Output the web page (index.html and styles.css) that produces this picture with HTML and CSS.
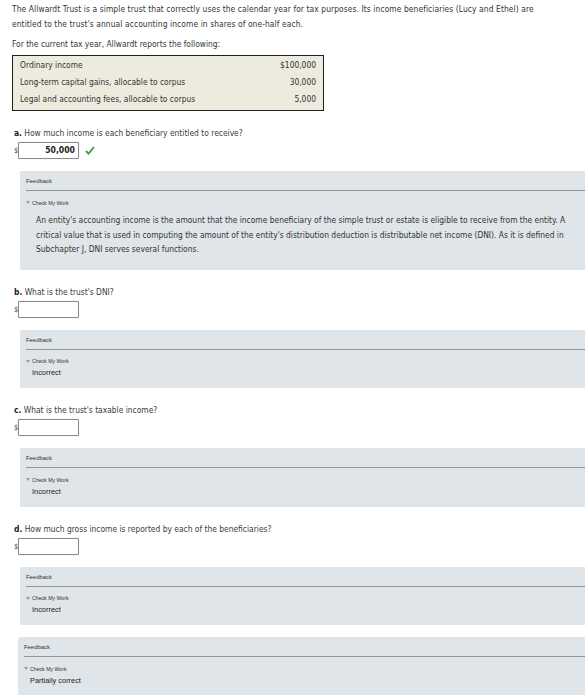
FILE: index.html
```html
<!DOCTYPE html>
<html>
<head>
<meta charset="utf-8">
<link rel="stylesheet" href="styles.css">
</head>
<body>
<div class="page">
  <p class="intro">The Allwardt Trust is a simple trust that correctly uses the calendar year for tax purposes. Its income beneficiaries (Lucy and Ethel) are entitled to the trust's annual accounting income in shares of one-half each.</p>
  <p class="intro2">For the current tax year, Allwardt reports the following:</p>
  <div class="table">
    <div class="row"><span>Ordinary income</span><span>$100,000</span></div>
    <div class="row"><span>Long-term capital gains, allocable to corpus</span><span>30,000</span></div>
    <div class="row"><span>Legal and accounting fees, allocable to corpus</span><span>5,000</span></div>
  </div>

  <div class="question">
    <div class="qlabel"><b>a.</b> How much income is each beneficiary entitled to receive?</div>
    <div class="answer"><span class="dollar">$</span><span class="input filled">50,000</span><svg class="check" width="10" height="9" viewBox="0 0 10 9"><path d="M1 5 L3.6 7.6 L9 1" fill="none" stroke="#3f9a3a" stroke-width="1.8"/></svg></div>
  </div>
  <div class="feedback">
    <div class="fb-title">Feedback</div>
    <div class="fb-check"><span class="tri"></span>Check My Work</div>
    <p class="fb-text">An entity's accounting income is the amount that the income beneficiary of the simple trust or estate is eligible to receive from the entity. A critical value that is used in computing the amount of the entity's distribution deduction is distributable net income (DNI). As it is defined in Subchapter J, DNI serves several functions.</p>
  </div>

  <div class="question">
    <div class="qlabel"><b>b.</b> What is the trust's DNI?</div>
    <div class="answer"><span class="dollar">$</span><span class="input"></span></div>
  </div>
  <div class="feedback short">
    <div class="fb-title">Feedback</div>
    <div class="fb-check"><span class="tri"></span>Check My Work</div>
    <div class="fb-result">Incorrect</div>
  </div>

  <div class="question">
    <div class="qlabel"><b>c.</b> What is the trust's taxable income?</div>
    <div class="answer"><span class="dollar">$</span><span class="input"></span></div>
  </div>
  <div class="feedback short">
    <div class="fb-title">Feedback</div>
    <div class="fb-check"><span class="tri"></span>Check My Work</div>
    <div class="fb-result">Incorrect</div>
  </div>

  <div class="question">
    <div class="qlabel"><b>d.</b> How much gross income is reported by each of the beneficiaries?</div>
    <div class="answer"><span class="dollar">$</span><span class="input"></span></div>
  </div>
  <div class="feedback short">
    <div class="fb-title">Feedback</div>
    <div class="fb-check"><span class="tri"></span>Check My Work</div>
    <div class="fb-result">Incorrect</div>
  </div>

  <div class="feedback short last">
    <div class="fb-title">Feedback</div>
    <div class="fb-check"><span class="tri"></span>Check My Work</div>
    <div class="fb-result">Partially correct</div>
  </div>
</div>
</body>
</html>
```

FILE: styles.css
```css
html, body {
  margin: 0;
  padding: 0;
  background: #ffffff;
  overflow: hidden;
}

.page {
  font-family: "DejaVu Sans Condensed", "DejaVu Sans", sans-serif;
  font-size: 8.4px;
  color: #333333;
  padding: 2px 0 0 12px;
}

p {
  margin: 0;
}

.intro {
  line-height: 15px;
  width: 532px;
  letter-spacing: 0.09px;
}

.intro2 {
  line-height: 15px;
  margin-top: 5px;
}

.table {
  margin-top: 3px;
  width: 296px;
  border: 1.5px solid #1f1f1f;
  background: #edebdd;
  padding: 1px 7px 2px 7px;
}

.row {
  display: flex;
  justify-content: space-between;
  line-height: 17px;
}

.question {
  margin-top: 15px;
  padding-left: 2px;
}

.qlabel {
  line-height: 14px;
  color: #3a3a44;
}

.qlabel b {
  color: #222;
}

.answer {
  display: flex;
  align-items: center;
  margin-top: 2px;
  height: 17px;
}

.dollar {
  width: 4px;
  font-size: 7.5px;
  overflow: hidden;
  color: #444;
}

.input {
  box-sizing: border-box;
  width: 61px;
  height: 17px;
  border: 1px solid #8a8a8a;
  border-radius: 1px;
  background: #fff;
  box-shadow: 0 0 1px rgba(0,0,0,0.25);
  text-align: right;
  font-weight: bold;
  font-size: 8.6px;
  line-height: 15px;
  padding-right: 3px;
  color: #222;
}

.check {
  margin-left: 6px;
}

.feedback {
  margin: 12px 0 0 8px;
  background: #dfe5e8;
  border-radius: 2px 0 0 2px;
  padding: 6px 0 0 6px;
  box-sizing: border-box;
}

.fb-title {
  font-family: "Liberation Sans", Arial, sans-serif;
  font-size: 5.9px;
  color: #333;
  line-height: 8px;
  padding-bottom: 5px;
  border-bottom: 1.5px solid #8f9697;
}

.fb-check {
  font-family: "Liberation Sans", Arial, sans-serif;
  font-size: 5.2px;
  color: #333;
  line-height: 8px;
  margin-top: 7.5px;
  display: flex;
  align-items: center;
}

.tri {
  display: inline-block;
  width: 0;
  height: 0;
  border-left: 2px solid transparent;
  border-right: 2px solid transparent;
  border-top: 3px solid #999;
  margin-right: 2px;
}

.fb-text {
  margin: 6.5px 0 0 10px;
  line-height: 14.5px;
  width: 540px;
  padding-bottom: 13px;
}

.fb-result {
  font-family: "Liberation Sans", Arial, sans-serif;
  font-size: 7.4px;
  color: #222;
  line-height: 10px;
  margin: 3px 0 0 6px;
  padding-bottom: 10px;
}

.feedback.last {
  margin-left: 6px;
  margin-top: 12px;
}
```
